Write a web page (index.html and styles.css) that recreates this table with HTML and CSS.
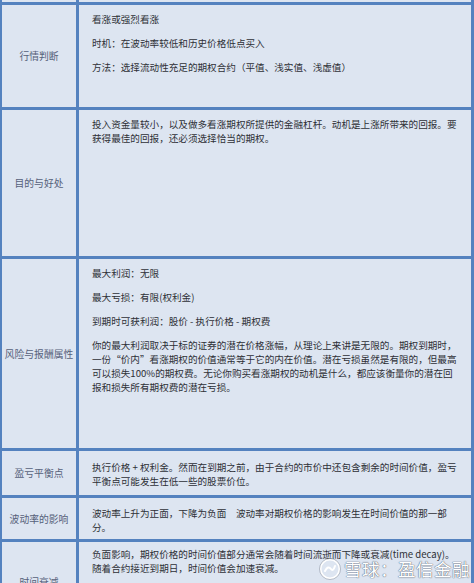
FILE: index.html
```html
<!DOCTYPE html>
<html lang="zh-CN">
<head>
<meta charset="utf-8">
<link rel="stylesheet" href="styles.css">
</head>
<body>
<div class="sheet">
  <div class="strip"></div>
  <div class="strip"></div>

  <div class="cell label r1">行情判断</div>
  <div class="cell body r1">
    <p>看涨或强烈看涨</p>
    <p>时机：在波动率较低和历史价格低点买入</p>
    <p>方法：选择流动性充足的期权合约（平值、浅实值、浅虚值）</p>
  </div>

  <div class="cell label r2">目的与好处</div>
  <div class="cell body r2">
    <p>投入资金量较小，以及做多看涨期权所提供的金融杠杆。动机是上涨所带来的回报。要<br>获得最佳的回报，还必须选择恰当的期权。</p>
  </div>

  <div class="cell label r3">风险与报酬属性</div>
  <div class="cell body r3">
    <p>最大利润：无限</p>
    <p>最大亏损：有限(权利金)</p>
    <p>到期时可获利润：股价 - 执行价格 - 期权费</p>
    <p>你的最大利润取决于标的证券的潜在价格涨幅，从理论上来讲是无限的。期权到期时，<br>一份“价内”看涨期权的价值通常等于它的内在价值。潜在亏损虽然是有限的，但最高<br>可以损失100%的期权费。无论你购买看涨期权的动机是什么，都应该衡量你的潜在回<br>报和损失所有期权费的潜在亏损。</p>
  </div>

  <div class="cell label r4">盈亏平衡点</div>
  <div class="cell body r4">
    <p>执行价格 + 权利金。然而在到期之前，由于合约的市价中还包含剩余的时间价值，盈亏<br>平衡点可能发生在低一些的股票价位。</p>
  </div>

  <div class="cell label r5">波动率的影响</div>
  <div class="cell body r5">
    <p>波动率上升为正面，下降为负面　波动率对期权价格的影响发生在时间价值的那一部<br>分。</p>
  </div>

  <div class="cell label r6">时间衰减</div>
  <div class="cell body r6">
    <p>负面影响，期权价格的时间价值部分通常会随着时间流逝而下降或衰减(time decay)。<br>随着合约接近到期日，时间价值会加速衰减。</p>
  </div>
</div>

<div class="mark">
  <svg class="logo" width="22" height="22" viewBox="0 0 22 22">
    <circle cx="11" cy="11" r="9.5" fill="none" stroke="#fff" stroke-width="2"/>
    <path d="M6 13 Q9 7 12 11 Q14 14 16 8" fill="none" stroke="#fff" stroke-width="2" stroke-linecap="round"/>
    <circle cx="11" cy="11" r="10.5" fill="none" stroke="rgba(90,100,120,0.5)" stroke-width="0.8"/>
  </svg>
  <span class="mark-text">雪球：盈信金融</span>
</div>
</body>
</html>
```

FILE: styles.css
```css
html, body {
  margin: 0;
  padding: 0;
}
body {
  width: 474px;
  height: 583px;
  overflow: hidden;
  background: #dde5f1;
  position: relative;
  font-family: "Noto Sans CJK SC", "Microsoft YaHei", sans-serif;
}
.sheet {
  display: grid;
  grid-template-columns: 74px 392px;
  grid-template-rows: 2px 102px 146px 189px 44px 41px 80px;
  column-gap: 3px;
  row-gap: 3px;
  padding: 0 3px 0 2px;
  background: #5482bf;
}
.strip {
  background: #dde5f1;
}
.cell {
  background: #dde5f1;
  box-sizing: border-box;
  overflow: hidden;
}
.label {
  display: flex;
  align-items: center;
  justify-content: center;
  font-size: 9.8px;
  color: #56617a;
  text-align: center;
}
.body {
  padding: 7px 6px 0 13px;
  font-size: 9.6px;
  line-height: 14px;
  color: #2e3036;
  white-space: nowrap;
}
.body p {
  margin: 0 0 10px 0;
}
.body.r4 { padding-top: 9px; }
.body.r5 { padding-top: 8px; }
.body.r6 { padding-top: 5px; }

.mark {
  position: absolute;
  right: 4px;
  bottom: 3px;
  display: flex;
  align-items: center;
  gap: 3px;
}
.logo {
  display: block;
}
.mark-text {
  font-size: 17.5px;
  line-height: 20px;
  color: #ffffff;
  letter-spacing: 0.5px;
  text-shadow: 0 0 1px rgba(70, 80, 100, 0.9), 0 0 1px rgba(70, 80, 100, 0.9);
}
```
